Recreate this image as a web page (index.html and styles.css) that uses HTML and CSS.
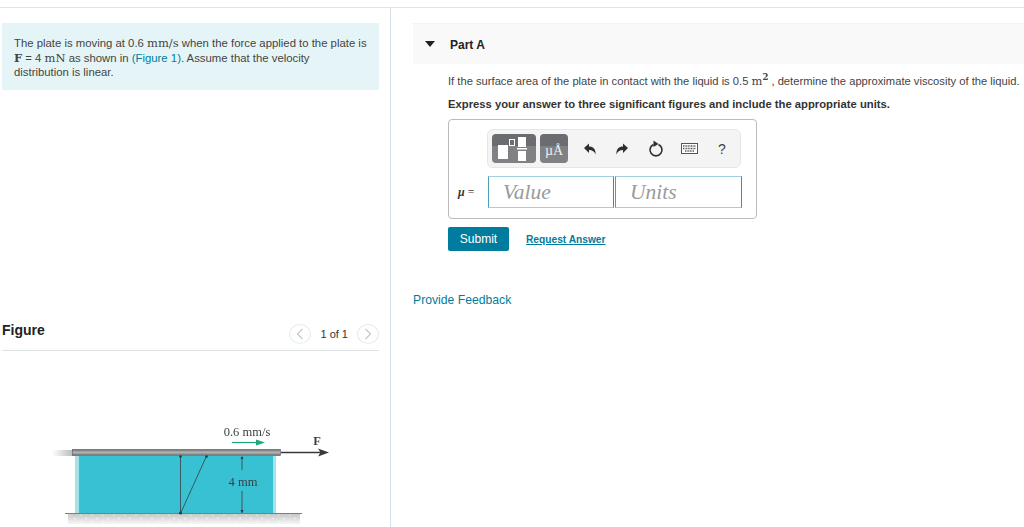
FILE: index.html
```html
<!DOCTYPE html>
<html lang="en">
<head>
<meta charset="utf-8">
<title>Part A</title>
<link rel="stylesheet" href="styles.css">
</head>
<body>
<div class="page">
  <section class="left">
    <div class="intro">The plate is moving at 0.6 <span class="m">mm/s</span> when the force applied to the plate is<br><span class="m b">F</span> = 4 <span class="m">mN</span> as shown in <a class="link">(Figure 1)</a>. Assume that the velocity<br>distribution is linear.</div>
    <div class="fig-head">
      <h2 class="fig-title">Figure</h2>
      <div class="pager">
        <span class="circle"><svg width="8" height="12" viewBox="0 0 8 12"><path d="M6.500 1 1.500 6l5 5" fill="none" stroke="#c4cacf" stroke-width="1.300"/></svg></span>
        <span class="count">1 of 1</span>
        <span class="circle"><svg width="8" height="12" viewBox="0 0 8 12"><path d="M1.500 1l5 5-5 5" fill="none" stroke="#c4cacf" stroke-width="1.300"/></svg></span>
      </div>
    </div>
    <svg class="figure" width="300" height="112" viewBox="0 0 300 112">
      <defs>
        <linearGradient id="fade" x1="0" x2="1" y1="0" y2="0"><stop offset="0" stop-color="#fff"/><stop offset="1" stop-color="#b9bcbc"/></linearGradient>
        <linearGradient id="plate" x1="0" x2="0" y1="0" y2="1"><stop offset="0" stop-color="#6d7070"/><stop offset=".5" stop-color="#b2b5b4"/><stop offset="1" stop-color="#6a6d6d"/></linearGradient>
        <linearGradient id="ground" x1="0" x2="0" y1="0" y2="1"><stop offset="0" stop-color="#c6c8c6"/><stop offset="1" stop-color="#f6f6f6"/></linearGradient>
        <pattern id="speck" width="11" height="6" patternUnits="userSpaceOnUse"><circle cx="2" cy="1.500" r=".7" fill="#fff"/><circle cx="8" cy="4" r=".6" fill="#fff"/></pattern>
      </defs>
      <rect x="12" y="35" width="21" height="6" fill="url(#fade)"/>
      <rect x="39" y="41" width="194" height="57" fill="#37c1d3"/>
      <rect x="35" y="41" width="4" height="57" fill="#a5e2ea"/>
      <rect x="233" y="41" width="3" height="57" fill="#a5e2ea"/>
      <rect x="28" y="99" width="232" height="10" fill="url(#ground)"/>
      <rect x="28" y="99" width="232" height="9" fill="url(#speck)"/>
      <path d="M25 98.500h237" stroke="#7c7f7f" stroke-width="1.200"/>
      <rect x="32.500" y="34.500" width="208" height="6" fill="url(#plate)" stroke="#555" stroke-width=".6"/>
      <path d="M241 37.500h40" stroke="#33393c" stroke-width="1.400"/>
      <path d="M278 33.500l11 4-11 4 2.500-4z" fill="#33393c"/>
      <path d="M140.500 41v57.500L166.500 41M202 42v13M202 76v22" fill="none" stroke="#3a3f42" stroke-width=".8"/>
      <circle cx="140.500" cy="41.500" r="1.300" fill="#30363a"/><circle cx="166.500" cy="41.500" r="1.300" fill="#30363a"/><circle cx="140.500" cy="98" r="1.500" fill="#30363a"/>
      <path d="M202 41l-1.500 3h3zM202 98l-1.500-3h3z" fill="#30363a"/>
      <path d="M192 27.500h25" stroke="#1fa876" stroke-width="1.200"/><path d="M216 24.500l9 3-9 3z" fill="#1fa876"/>
      <text class="fig-label" x="207" y="21" text-anchor="middle">0.6 mm/s</text>
      <text class="fig-label" x="203" y="71" text-anchor="middle">4 mm</text>
      <text class="fig-label fig-bold" x="277" y="30" text-anchor="middle">F</text>
    </svg>
  </section>
  <section class="right">
    <div class="part-head">
      <svg class="caret" width="10" height="6" viewBox="0 0 10 6"><path d="M0 0h10L5 6z" fill="#222"/></svg>
      <h2 class="part-title">Part A</h2>
    </div>
    <div class="part-body">
      <p class="q">If the surface area of the plate in contact with the liquid is 0.5 <span class="m q-m">m<sup>2</sup></span> , determine the approximate viscosity of the liquid.</p>
      <p class="instr">Express your answer to three significant figures and include the appropriate units.</p>
      <div class="answer">
        <div class="toolbar">
          <span class="tool-btn tool-wide">
            <svg width="44" height="29" viewBox="0 0 44 29"><rect x="6" y="11" width="10" height="14" fill="#fff"/><rect x="17.500" y="5.500" width="5" height="6" fill="none" stroke="#fff"/><rect x="26" y="3" width="8" height="10" fill="#fff"/><rect x="25" y="14" width="10" height="1.500" fill="#fff"/><rect x="26" y="17" width="8" height="10" fill="#fff"/></svg>
          </span>
          <span class="tool-btn tool-unit">µÅ</span>
          <svg class="ico" width="14" height="14" viewBox="0 0 14 14"><path d="M1 6 6 1.500v3c4 0 7 2.500 6.500 8C11.500 9.500 9.500 8 6 8v3z" fill="#2b3033"/></svg>
          <svg class="ico" width="14" height="14" viewBox="0 0 14 14"><path d="M13 6 8 1.500v3c-4 0-7 2.500-6.500 8C2.500 9.500 4.500 8 8 8v3z" fill="#2b3033"/></svg>
          <svg class="ico" width="16" height="18" viewBox="0 0 16 18"><path d="M10.500 4.400a6 6 0 1 1-5 0" fill="none" stroke="#2b3033" stroke-width="1.600"/><path d="M5.500 0.500v6.500L10.500 4z" fill="#2b3033"/></svg>
          <svg class="ico" width="17" height="11" viewBox="0 0 17 11"><rect x=".5" y=".5" width="16" height="10" fill="#fff" stroke="#555"/><path d="M2 3h13M2 5.500h13M4 8h9" stroke="#555" stroke-width="1.400" stroke-dasharray="1 .6"/></svg>
          <span class="help">?</span>
        </div>
        <div class="fields">
          <span class="mu"><i>μ</i> =</span>
          <span class="field">Value</span>
          <span class="field field-units">Units</span>
        </div>
      </div>
      <div class="actions">
        <button class="submit">Submit</button>
        <a class="req">Request Answer</a>
      </div>
    </div>
    <a class="feedback">Provide Feedback</a>
  </section>
</div>
</body>
</html>
```
FILE: styles.css
```css
* { box-sizing: border-box; }
html, body { margin: 0; padding: 0; height: 527px; overflow: hidden; background: #fff; }
body { font-family: "Liberation Sans", Arial, sans-serif; color: #333; padding-top: 7px; }
.page { display: flex; height: 520px; border-top: 1px solid #dfe5ea; }
.left { width: 391px; flex: none; border-right: 1px solid #d6e0e8; padding: 15px 11px 0 2px; }
.intro { height: 67px; background: #e5f5f7; padding: 13px 12px 0 12px; font-size: 11.350px; line-height: 14.500px; color: #444; white-space: nowrap; }
.m { font-family: "DejaVu Serif", "Liberation Serif", serif; font-size: 11.500px; }
.b { font-weight: bold; }
.link { color: #007c9e; }
.fig-head { display: flex; align-items: center; justify-content: space-between; margin-top: 229px; height: 32px; border-bottom: 1px solid #dde2e5; }
.fig-title { margin: 0; font-size: 14px; font-weight: bold; color: #222; line-height: 20px; margin-top: -10px; }
.pager { display: flex; align-items: center; gap: 9px; font-size: 11px; color: #333; margin-top: -1px; }
.circle { width: 22px; height: 20px; border: 1px solid #e9ebed; border-radius: 50%; display: flex; align-items: center; justify-content: center; }
.figure { display: block; margin: 64px 0 0 38px; filter: blur(.35px); }
.fig-label { font-family: "Liberation Serif", serif; font-size: 12.500px; fill: #3a3f42; }
.fig-bold { font-weight: bold; }
.right { flex: 1; min-width: 0; padding: 15px 0 0 22px; }
.part-head { height: 41px; background: #f9f9f9; display: flex; align-items: center; border-top: 1px solid #f3f3f3; }
.caret { margin-left: 12px; flex: none; }
.part-title { margin: 1px 0 0 15px; font-size: 12px; font-weight: bold; color: #222; }
.part-body { padding-left: 35px; }
.q { margin: 9px 0 0; font-size: 11.200px; line-height: 16px; color: #444; white-space: nowrap; }
.q-m { font-size: 11.500px; }
.q-m sup { font-size: 8.500px; line-height: 0; font-weight: bold; }
.instr { margin: 7px 0 0; font-size: 11.270px; font-weight: bold; line-height: 16px; color: #333; white-space: nowrap; }
.answer { width: 309px; height: 100px; margin-top: 7px; border: 1px solid #bbb; border-radius: 4px; padding: 9px 14px 0 38px; }
.toolbar { width: 254px; height: 39px; background: #f4f4f4; border: 1px solid #e6e6e6; border-radius: 6px; display: flex; align-items: center; padding-left: 4px; }
.tool-btn { height: 29px; background: linear-gradient(#6b6c6f 0 40%, #808185 40%); border-radius: 4px; display: flex; align-items: center; justify-content: center; color: #eee; }
.tool-wide { width: 44px; }
.tool-unit { width: 28px; margin-left: 4px; font-family: "Liberation Serif", serif; font-size: 14px; padding-top: 5px; }
.ico { display: block; flex: none; }
.toolbar .ico:nth-of-type(1) { margin-left: 15px; }
.toolbar .ico:nth-of-type(2) { margin-left: 18px; }
.toolbar .ico:nth-of-type(3) { margin-left: 19px; }
.toolbar .ico:nth-of-type(4) { margin-left: 17px; }
.help { margin-left: 20px; font-size: 14px; color: #444; }
.fields { display: flex; align-items: stretch; margin: 8px 0 0 -29px; height: 32px; }
.mu { width: 30px; font-size: 11.500px; color: #444; display: flex; align-items: center; font-family: "Liberation Serif", serif; gap: 3px; white-space: nowrap; }
.mu i { font-weight: bold; font-size: 12px; color: #333; }
.field { width: 126px; margin-right: 1px; border: 1px solid #9fd0dc; border-left-color: #4e9fb6; border-right-color: #3d8da5; font-family: "Liberation Serif", serif; font-style: italic; font-size: 21.500px; color: #9a9a9a; padding: 0 0 0 14px; display: flex; align-items: center; }
.field-units { width: 127px; margin-right: 0; }
.actions { display: flex; align-items: center; margin-top: 8px; }
.submit { width: 61px; height: 24px; background: #007c9e; border: 0; border-radius: 2px; color: #fff; font: 12px "Liberation Sans", Arial, sans-serif; padding: 0; }
.req { margin-left: 17px; font-size: 10.200px; font-weight: bold; color: #007c9e; text-decoration: underline; }
.feedback { display: block; margin-top: 42px; font-size: 12.200px; color: #007c9e; }
```
